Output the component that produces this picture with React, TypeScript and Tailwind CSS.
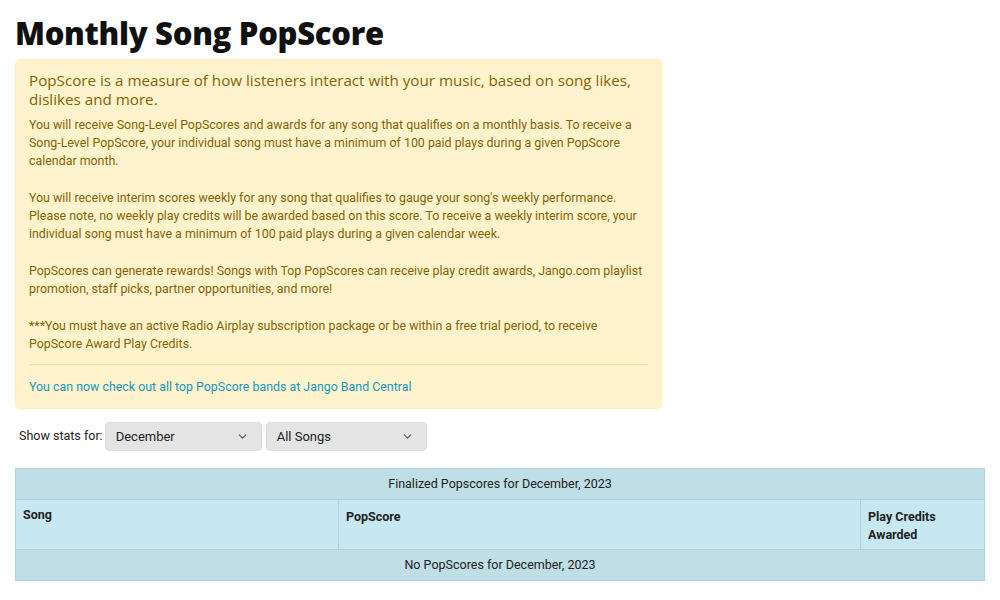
import { ChevronDown } from "lucide-react";

const body = "font-['Roboto','Liberation_Sans',sans-serif]";

function Select({ label, width }: { label: string; width: string }) {
  return (
    <div
      className={`flex h-[29px] ${width} items-center justify-between rounded-[4px] border border-[#dedede] bg-[#e4e4e4] pl-[10px] pr-[12px] text-[13px] text-[#222]`}
    >
      <span>{label}</span>
      <ChevronDown size={13} strokeWidth={2} className="text-[#555]" />
    </div>
  );
}

export default function App() {
  return (
    <div className={`min-h-[600px] bg-white px-[15px] pt-[13px] ${body}`}>
      <h1 className="font-['Open_Sans',sans-serif] text-[31px] font-extrabold leading-[40px] tracking-[-0.3px] text-[#111]">
        Monthly Song PopScore
      </h1>
      <div className="mt-[6px] w-[647px] rounded-[5px] border border-[#ffeeba] bg-[#fff3cd] px-[13px] pb-[12px] pt-[11px] text-[#856404]">
        <p className="font-['Open_Sans',sans-serif] text-[15.2px] leading-[19px]">
          PopScore is a measure of how listeners interact with your music, based on song likes,
          dislikes and more.
        </p>
        <div className="mt-[7px] text-[12.4px] leading-[18px]">
          <p>
            You will receive Song-Level PopScores and awards for any song that qualifies on a monthly
            basis. To receive a Song-Level PopScore, your individual song must have a minimum of 100
            paid plays during a given PopScore calendar month.
          </p>
          <p className="mt-[19px]">
            You will receive interim scores weekly for any song that qualifies to gauge your song's
            weekly performance. Please note, no weekly play credits will be awarded based on this
            score. To receive a weekly interim score, your individual song must have a minimum of 100
            paid plays during a given calendar week.
          </p>
          <p className="mt-[19px]">
            PopScores can generate rewards! Songs with Top PopScores can receive play credit awards,
            Jango.com playlist promotion, staff picks, partner opportunities, and more!
          </p>
          <p className="mt-[19px]">
            ***You must have an active Radio Airplay subscription package or be within a free trial
            period, to receive PopScore Award Play Credits.
          </p>
          <hr className="mb-[13px] mt-[11px] border-t border-[#f0dca0]" />
          <p className="text-[#1798c0]">You can now check out all top PopScore bands at Jango Band Central</p>
        </div>
      </div>
      <div className="mt-[13px] flex items-center gap-[4px] pl-[4px] text-[12.5px] text-[#222]">
        <span className="mr-[-2px]">Show stats for:</span>
        <Select label="December" width="w-[157px]" />
        <Select label="All Songs" width="w-[161px]" />
      </div>
      <table className="mt-[17px] w-[970px] border-collapse text-[12.5px] text-[#222]">
        <thead>
          <tr>
            <th
              colSpan={3}
              className="h-[31px] border border-[#aed4de] bg-[#bfdee6] font-normal"
            >
              Finalized Popscores for December, 2023
            </th>
          </tr>
          <tr className="bg-[#c7e8f1] text-left align-top">
            <th className="h-[50px] w-[323px] border border-[#aed4de] px-[7px] pt-[6px] font-bold">Song</th>
            <th className="border border-[#aed4de] px-[7px] pt-[8px] font-bold">PopScore</th>
            <th className="w-[124px] border border-[#aed4de] px-[7px] pt-[8px] font-bold leading-[18px]">
              Play Credits Awarded
            </th>
          </tr>
        </thead>
        <tbody>
          <tr>
            <td
              colSpan={3}
              className="h-[31px] border border-[#aed4de] bg-[#bfdee6] text-center"
            >
              No PopScores for December, 2023
            </td>
          </tr>
        </tbody>
      </table>
    </div>
  );
}
